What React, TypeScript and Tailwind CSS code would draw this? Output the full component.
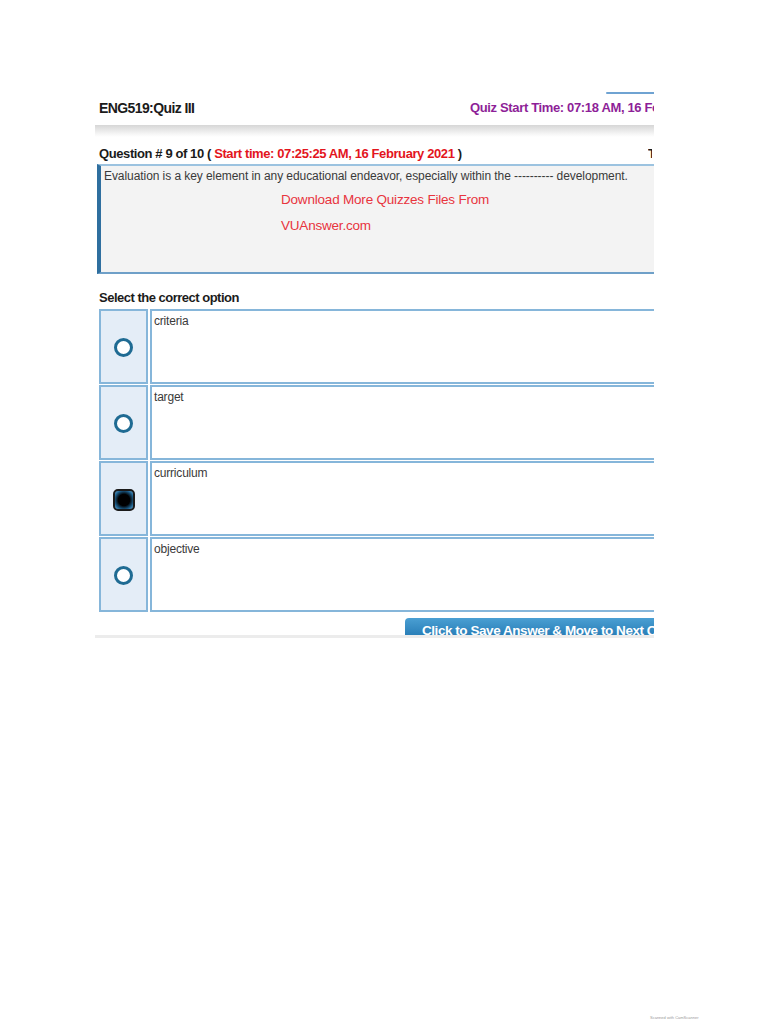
const options = [
  { label: 'criteria', selected: false },
  { label: 'target', selected: false },
  { label: 'curriculum', selected: true },
  { label: 'objective', selected: false },
]

function Radio({ selected }: { selected: boolean }) {
  if (selected) {
    return (
      <div className="w-[22px] h-[22px] rounded-[5px] border-2 border-[#1a1a1a] bg-[radial-gradient(circle,#000_0%,#000_45%,#1d5f8c_75%,#6fb0d8_100%)]" />
    )
  }
  return <div className="w-[19px] h-[19px] rounded-full border-[3px] border-[#1f6b93] bg-white" />
}

function OptionRow({ label, selected }: { label: string; selected: boolean }) {
  return (
    <div className="flex gap-[2px] h-[75px]">
      <div className="w-[49px] shrink-0 border-2 border-[#86b6da] bg-[#e4edf7] flex items-center justify-center pt-[2px]">
        <Radio selected={selected} />
      </div>
      <div className="flex-1 min-w-[520px] border-2 border-[#86b6da] bg-white px-[2px] pt-[2px] text-[12px] leading-[16px] text-[#3a3a3a] tracking-[-0.2px]">
        {label}
      </div>
    </div>
  )
}

export default function App() {
  return (
    <div className="w-[768px] h-[1024px] bg-white relative font-['Liberation_Sans',Arial,sans-serif]">
      <div className="pt-[92px] pl-[95px]">
        <div className="w-[559px] overflow-hidden">
          <div className="flex justify-end">
            <div className="w-[48px] h-[2px] bg-[#6fa3d2] rounded-l-full" />
          </div>
          <div className="grid grid-cols-[375px_1fr] items-center h-[26px] mt-[1px]">
            <div className="pl-[4px] text-[14px] font-bold text-[#1b1b1b] tracking-[-0.6px] whitespace-nowrap">
              ENG519:Quiz III
            </div>
            <div className="text-[13px] font-bold text-[#8e1f98] tracking-[-0.35px] whitespace-nowrap">
              Quiz Start Time: 07:18 AM, 16 February 2021
            </div>
          </div>
          <div className="h-[12px] mt-[4px] bg-[linear-gradient(to_bottom,#d6d6d6,#f4f4f4_70%,#ffffff)]" />
          <div className="flex justify-between items-center h-[21px] mt-[6px] pl-[4px] pr-[2px] text-[13px] font-bold tracking-[-0.4px] whitespace-nowrap">
            <div className="text-[#1b1b1b]">
              Question # 9 of 10 ( <span className="text-[#e3151d]">Start time: 07:25:25 AM, 16 February 2021</span> )
            </div>
            <div className="text-[#1b1b1b] w-[4px] overflow-hidden">T</div>
          </div>
          <div className="ml-[2px] h-[110px] bg-[#f3f3f3] border-l-[4px] border-l-[#2f6f9f] border-t-2 border-t-[#9cc3e0] border-b-2 border-b-[#6fa0c8] pl-[3px] pt-[3px]">
            <div className="text-[12px] leading-[15px] text-[#3a3a3a] tracking-[-0.07px] whitespace-nowrap">
              Evaluation is a key element in any educational endeavor, especially within the ---------- development.
            </div>
            <div className="pl-[177px] mt-[7px] text-[13.5px] leading-[18px] text-[#e8343e] tracking-[-0.2px] whitespace-nowrap">
              Download More Quizzes Files From
            </div>
            <div className="pl-[177px] mt-[8px] text-[13.5px] leading-[18px] text-[#e8343e] tracking-[-0.2px] whitespace-nowrap">
              VUAnswer.com
            </div>
          </div>
          <div className="pl-[4px] mt-[14px] h-[18px] text-[13px] font-bold text-[#1b1b1b] tracking-[-0.5px] whitespace-nowrap">
            Select the correct option
          </div>
          <div className="ml-[4px] mt-[3px] flex flex-col gap-[1px]">
            {options.map((o) => (
              <OptionRow key={o.label} label={o.label} selected={o.selected} />
            ))}
          </div>
          <div className="flex justify-end mt-[6px]">
            <div className="w-[249px] h-[17px] overflow-hidden rounded-tl-[4px] bg-[linear-gradient(to_bottom,#4a9fd3,#2a7fb8)] pl-[17px] pt-[4px] text-[13.5px] leading-[17px] font-bold text-white tracking-[-0.45px] whitespace-nowrap">
              Click to Save Answer &amp; Move to Next Question
            </div>
          </div>
          <div className="h-[3px] bg-[#ececec]" />
        </div>
      </div>
      <div className="absolute left-[650px] top-[1015px] text-[4px] text-[#9a9a9a] whitespace-nowrap">
        Scanned with CamScanner
      </div>
    </div>
  )
}
